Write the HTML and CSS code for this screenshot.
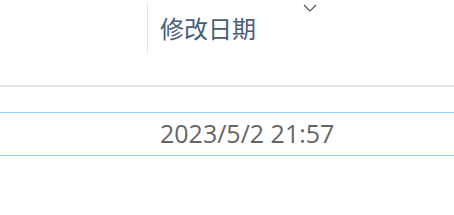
FILE: index.html
```html
<!DOCTYPE html>
<html lang="zh-CN">
<head>
    <meta charset="UTF-8">
    <title>修改日期</title>
    <link rel="stylesheet" href="styles.css">
</head>
<body>

<div class="list-header">
    <div class="col-name"></div>
    <div class="col-date">
        <span class="sort-arrow">
            <svg width="14" height="8" viewBox="0 0 14 8"><path d="M1 1 L7 7 L13 1" fill="none" stroke="#555" stroke-width="1.2"/></svg>
        </span>
        <span class="col-title">修改日期</span>
    </div>
</div>

<div class="header-rule"></div>

<div class="item-row"></div>

<div class="item-row selected">
    <div class="col-name"></div>
    <div class="item-date">2023/5/2 21:57</div>
</div>

</body>
</html>
```

FILE: styles.css
```css
body {
    margin: 0;
    padding: 0;
    background: #fff;
    font-family: "Open Sans", "Noto Sans CJK SC", sans-serif;
}

.list-header {
    display: flex;
    padding-top: 2px;
    height: 52px;
}

.col-name {
    width: 147px;
    flex-shrink: 0;
}

.col-date {
    position: relative;
    border-left: 1px solid #e3e3e3;
    padding-left: 12px;
    display: flex;
    align-items: center;
    width: 200px;
}

.col-title {
    font-family: "Noto Sans CJK SC", sans-serif;
    font-size: 24px;
    color: #4a5d78;
    padding-bottom: 2px;
}

.sort-arrow {
    position: absolute;
    left: 155px;
    top: 2px;
    line-height: 0;
}

.header-rule {
    margin-top: 31px;
    border-top: 2px solid #e5e5e5;
}

.item-row {
    height: 25px;
    border-bottom: 1px solid #99d1ff;
}

.item-row.selected {
    display: flex;
    align-items: center;
    height: 42px;
}

.item-date {
    padding-left: 13px;
    padding-bottom: 2px;
    font-size: 25px;
    color: #666;
}
```
